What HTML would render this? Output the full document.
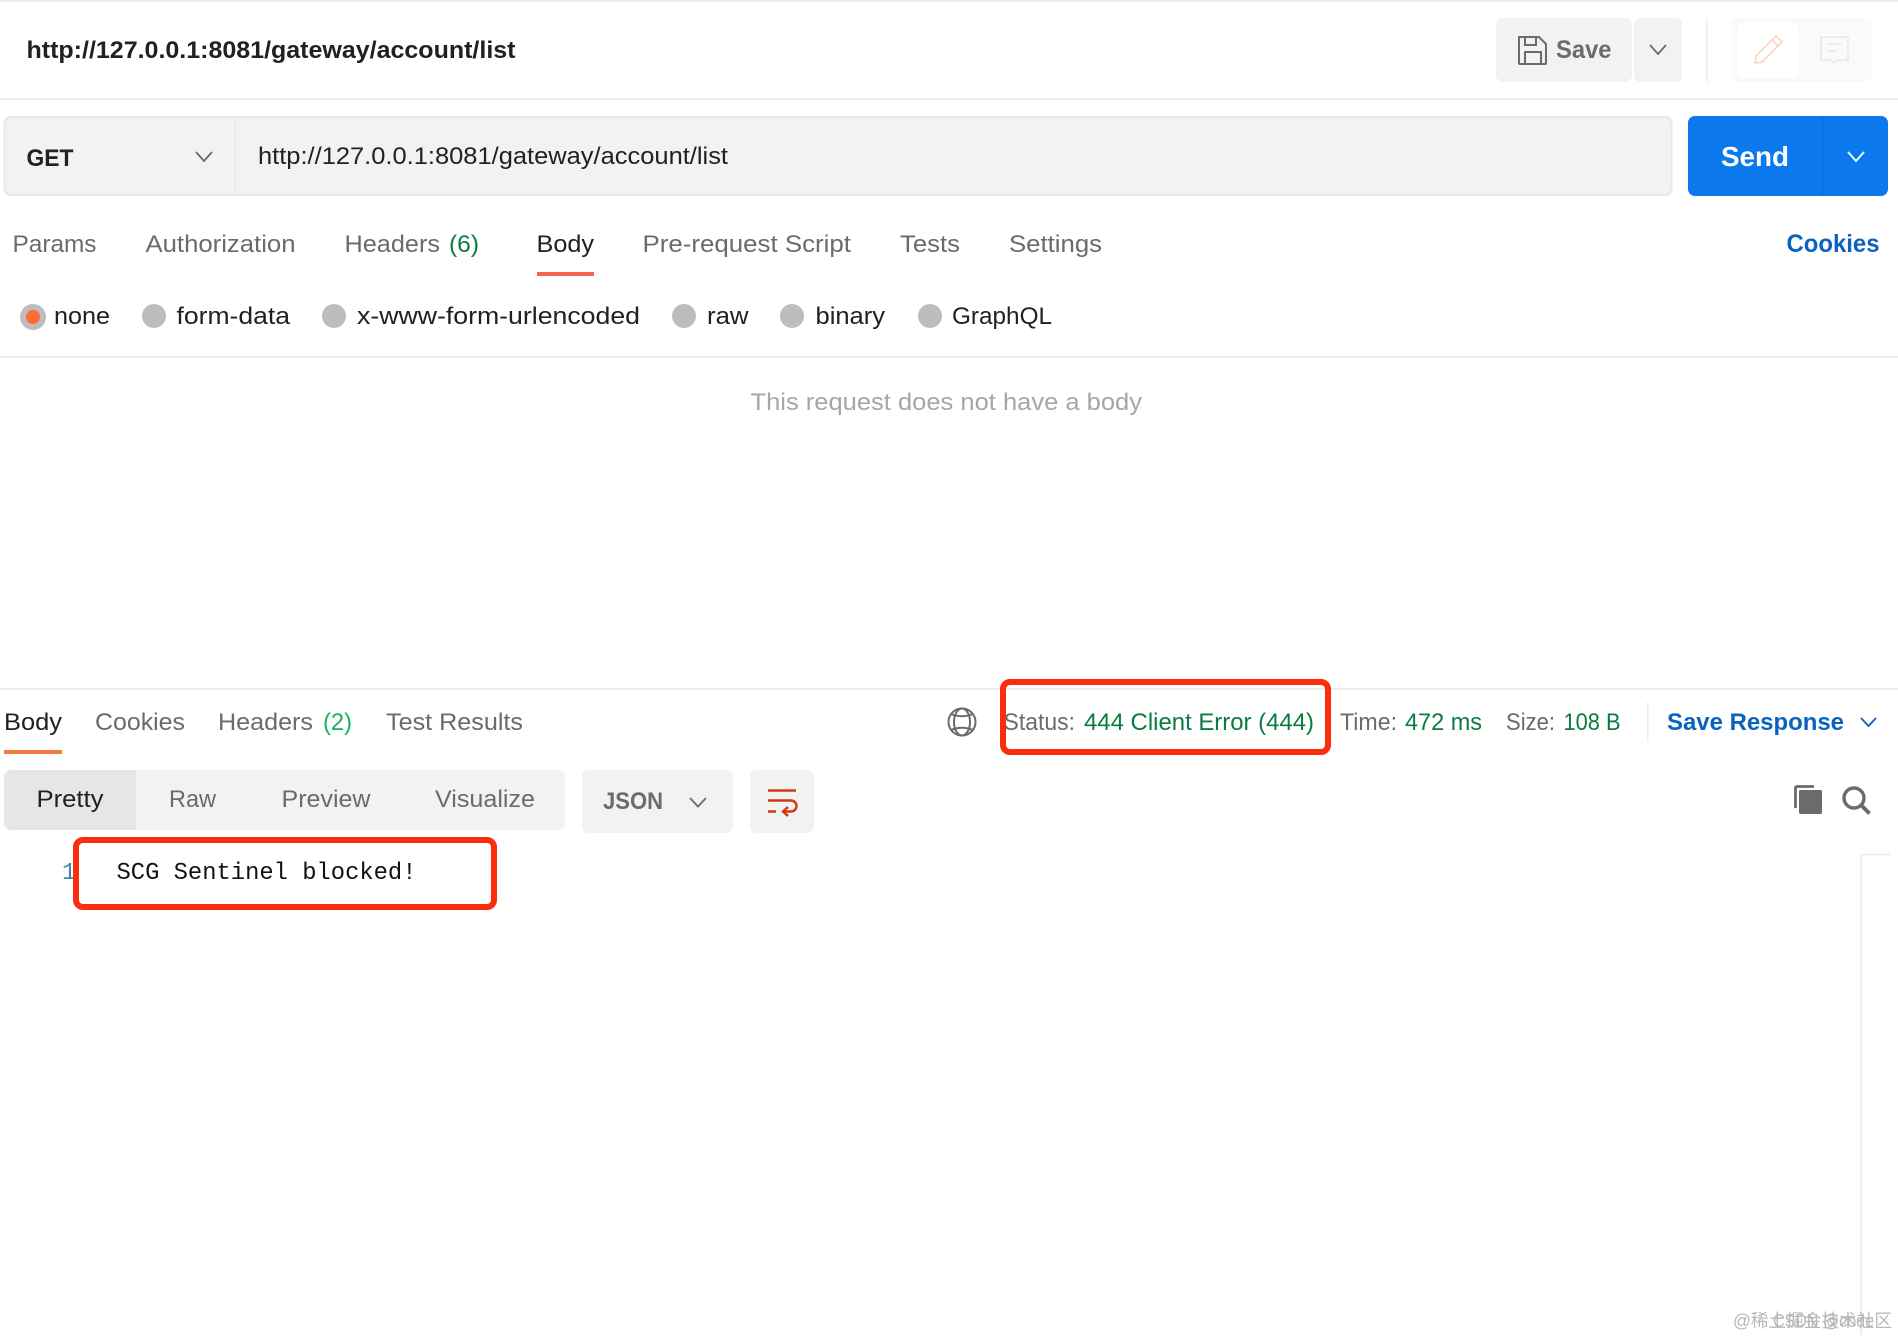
<!DOCTYPE html>
<html lang="en"><head><meta charset="utf-8"><title>Request</title>
<style>
html,body{margin:0;padding:0;background:#fff;width:1898px;height:1336px;overflow:hidden}
svg{display:block;filter:blur(.35px)}
text{font-family:"Liberation Sans","Noto Sans CJK SC",sans-serif;font-size:24px;fill:#6b6b6b}
.d{fill:#212121}.b{font-weight:bold}.g{fill:#0a7c42}.bl{fill:#0b62c0;font-weight:bold}
.ln{fill:#ededed}
.ic{fill:none;stroke:#6b6b6b;stroke-width:1.8}
</style></head><body>
<svg width="1898" height="1336" viewBox="0 0 1898 1336" xmlns="http://www.w3.org/2000/svg">
<rect x="0" y="0" width="1898" height="2" fill="#ececec"/>
<text class="d b" x="26.500" y="58" textLength="489" lengthAdjust="spacingAndGlyphs">http://127.0.0.1:8081/gateway/account/list</text>
<rect x="0" y="98" width="1898" height="2" class="ln"/>

<!-- save -->
<rect x="1496" y="18" width="136" height="64" rx="7" fill="#f2f2f2"/>
<rect x="1634" y="18" width="48" height="64" rx="7" fill="#f2f2f2"/>
<path d="M1519 37h20l7 7v19a1 1 0 0 1-1 1h-25a1 1 0 0 1-1-1zM1525 37v8h11v-8M1525 64v-12h16v12" fill="none" stroke="#6b6b6b" stroke-width="2"/>
<text class="b" x="1556" y="58" style="font-size:25px" textLength="55.500" lengthAdjust="spacingAndGlyphs">Save</text>
<path d="M1650 45l8 9 8-9" class="ic"/>
<rect x="1706" y="18" width="2" height="64" fill="#f1f1f1"/>
<rect x="1732" y="18" width="140" height="64" rx="7" fill="#fafafa"/>
<rect x="1737" y="23" width="62" height="55" rx="6" fill="#fff"/>
<path d="M1755 63l1-7 20-20 6 6-20 20zM1772 40l6 6" fill="none" stroke="#fcd6cc" stroke-width="1.800"/>
<path d="M1821 37h27v23h-10l-4 3-4-3h-9zM1827 44h15M1827 51h10" fill="none" stroke="#ebebeb" stroke-width="1.800"/>

<!-- request bar -->
<rect x="4.500" y="117" width="1667" height="78" rx="6" fill="#f2f2f2" stroke="#e8e8e8" stroke-width="2"/>
<rect x="234" y="117" width="1.500" height="78" fill="#ebebeb"/>
<text class="d b" x="26.500" y="166" textLength="47" lengthAdjust="spacingAndGlyphs">GET</text>
<path d="M196 152l8 9 8-9" class="ic"/>
<text class="d" x="258" y="164" textLength="470" lengthAdjust="spacingAndGlyphs">http://127.0.0.1:8081/gateway/account/list</text>
<rect x="1688" y="116" width="200" height="80" rx="7" fill="#0b79ec"/>
<rect x="1822" y="116" width="1.500" height="80" fill="#0a6ed8"/>
<text class="b" x="1721" y="166" style="font-size:28px;fill:#fff" textLength="68" lengthAdjust="spacingAndGlyphs">Send</text>
<path d="M1848 152l8 9 8-9" fill="none" stroke="#fff" stroke-width="1.800"/>

<!-- request tabs -->
<text x="12.500" y="252" textLength="84" lengthAdjust="spacingAndGlyphs">Params</text>
<text x="145.500" y="252" textLength="150" lengthAdjust="spacingAndGlyphs">Authorization</text>
<text x="344.500" y="252" textLength="95.500" lengthAdjust="spacingAndGlyphs">Headers</text>
<text class="g" x="449" y="252" textLength="30" lengthAdjust="spacingAndGlyphs">(6)</text>
<text class="d" x="536.500" y="252" textLength="57.500" lengthAdjust="spacingAndGlyphs">Body</text>
<rect x="537" y="272" width="57" height="4" fill="#f4664f"/>
<text x="642.500" y="252" textLength="208.500" lengthAdjust="spacingAndGlyphs">Pre-request Script</text>
<text x="900" y="252" textLength="60" lengthAdjust="spacingAndGlyphs">Tests</text>
<text x="1009" y="252" textLength="93" lengthAdjust="spacingAndGlyphs">Settings</text>
<text class="bl" x="1786.500" y="252" style="font-size:25px" textLength="93" lengthAdjust="spacingAndGlyphs">Cookies</text>

<!-- radios -->
<circle cx="33" cy="317" r="13" fill="#bdbdbd"/><circle cx="33" cy="317" r="7" fill="#ff6c37"/>
<text class="d" x="54" y="324" textLength="56" lengthAdjust="spacingAndGlyphs">none</text>
<circle cx="154" cy="316" r="12" fill="#bdbdbd"/>
<text class="d" x="176.500" y="324" textLength="113.500" lengthAdjust="spacingAndGlyphs">form-data</text>
<circle cx="334" cy="316" r="12" fill="#bdbdbd"/>
<text class="d" x="357" y="324" textLength="283" lengthAdjust="spacingAndGlyphs">x-www-form-urlencoded</text>
<circle cx="684" cy="316" r="12" fill="#bdbdbd"/>
<text class="d" x="707" y="324" textLength="41.500" lengthAdjust="spacingAndGlyphs">raw</text>
<circle cx="792" cy="316" r="12" fill="#bdbdbd"/>
<text class="d" x="815.500" y="324" textLength="69.500" lengthAdjust="spacingAndGlyphs">binary</text>
<circle cx="930" cy="316" r="12" fill="#bdbdbd"/>
<text class="d" x="952" y="324" textLength="100" lengthAdjust="spacingAndGlyphs">GraphQL</text>
<rect x="0" y="356" width="1898" height="2" class="ln"/>
<text x="750.500" y="410" style="fill:#a6a6a6" textLength="391.500" lengthAdjust="spacingAndGlyphs">This request does not have a body</text>

<!-- response tabs -->
<rect x="0" y="688" width="1898" height="2" class="ln"/>
<text class="d" x="4" y="730" textLength="58" lengthAdjust="spacingAndGlyphs">Body</text>
<rect x="4" y="750" width="58" height="4" fill="#f47a40"/>
<text x="95" y="730" textLength="90" lengthAdjust="spacingAndGlyphs">Cookies</text>
<text x="218" y="730" textLength="95" lengthAdjust="spacingAndGlyphs">Headers</text>
<text x="323" y="730" style="fill:#14b35c" textLength="29" lengthAdjust="spacingAndGlyphs">(2)</text>
<text x="386" y="730" textLength="137" lengthAdjust="spacingAndGlyphs">Test Results</text>

<g fill="none" stroke="#6b6b6b" stroke-width="2">
<circle cx="962" cy="722" r="13.500"/>
<ellipse cx="962" cy="722" rx="8" ry="13.500"/>
<path d="M951 714q11 4.500 22 0M951 730q11-4.500 22 0"/>
</g>

<text x="1003.500" y="730" textLength="71.500" lengthAdjust="spacingAndGlyphs">Status:</text>
<text class="g" x="1084" y="730" textLength="230" lengthAdjust="spacingAndGlyphs">444 Client Error (444)</text>
<text x="1340" y="730" textLength="57" lengthAdjust="spacingAndGlyphs">Time:</text>
<text class="g" x="1405" y="730" textLength="77" lengthAdjust="spacingAndGlyphs">472 ms</text>
<text x="1506" y="730" textLength="49" lengthAdjust="spacingAndGlyphs">Size:</text>
<text class="g" x="1563.500" y="730" textLength="57" lengthAdjust="spacingAndGlyphs">108 B</text>
<rect x="1647" y="702" width="1.500" height="40" fill="#ededed"/>
<text class="bl" x="1667" y="730" textLength="177" lengthAdjust="spacingAndGlyphs">Save Response</text>
<path d="M1861 718l7.500 8 7.500-8" fill="none" stroke="#0b62c0" stroke-width="1.800"/>

<rect x="1003" y="682" width="325" height="70" rx="7" fill="none" stroke="#fa2d0c" stroke-width="6"/>

<!-- format bar -->
<rect x="4" y="770" width="561" height="60" rx="7" fill="#f2f2f2"/>
<path d="M11 770h125v60h-125a7 7 0 0 1-7-7v-46a7 7 0 0 1 7-7z" fill="#e6e6e6"/>
<text class="d" x="36.500" y="807" textLength="67" lengthAdjust="spacingAndGlyphs">Pretty</text>
<text x="169" y="807" textLength="47" lengthAdjust="spacingAndGlyphs">Raw</text>
<text x="281.500" y="807" textLength="89" lengthAdjust="spacingAndGlyphs">Preview</text>
<text x="435" y="807" textLength="100" lengthAdjust="spacingAndGlyphs">Visualize</text>
<rect x="582" y="770" width="151" height="63" rx="7" fill="#f2f2f2"/>
<text class="b" x="603" y="809" textLength="60" lengthAdjust="spacingAndGlyphs">JSON</text>
<path d="M690 798l8 8.500 8-8.500" class="ic"/>
<rect x="750" y="770" width="64" height="63" rx="7" fill="#f2f2f2"/>
<path d="M768 790.500h28M768 800.500h23a5.500 5.500 0 0 1 0 11h-7M768 811.500h8M788 807l-5 4.500 5 4.500" fill="none" stroke="#cf3a10" stroke-width="2.400"/>

<!-- icons right -->
<path d="M1795.500 808v-20a1.500 1.500 0 0 1 1.500-1.500h17" fill="none" stroke="#6b6b6b" stroke-width="2.800"/>
<rect x="1799" y="790" width="23" height="24" rx="1.500" fill="#6b6b6b"/>
<circle cx="1854" cy="798" r="10" fill="none" stroke="#6b6b6b" stroke-width="3.400"/>
<path d="M1862 806l7.500 7.500" fill="none" stroke="#6b6b6b" stroke-width="4"/>

<!-- code -->
<text x="62" y="879" style="font-family:'Liberation Mono',monospace;font-size:23.800px;fill:#3d8ba8">1</text>
<text x="116.500" y="879" style="font-family:'Liberation Mono',monospace;font-size:23.800px;fill:#111" textLength="300" lengthAdjust="spacingAndGlyphs">SCG Sentinel blocked!</text>
<rect x="76" y="840" width="418" height="67" rx="7" fill="none" stroke="#fa2d0c" stroke-width="6"/>

<path d="M1890 854.500h-29v481" fill="none" stroke="#ececec" stroke-width="1.500"/>

<!-- watermark -->
<text x="1733" y="1327" style="font-size:18px;fill:#b8b8b8" textLength="159" lengthAdjust="spacingAndGlyphs">@稀土掘金技术社区</text>
<text x="1773" y="1327" style="font-size:18px;fill:#b8b8b8" textLength="101" lengthAdjust="spacingAndGlyphs">CSDN @code</text>
</svg>
</body></html>
